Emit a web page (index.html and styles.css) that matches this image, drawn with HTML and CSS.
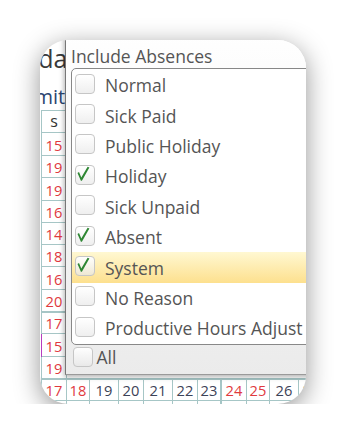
FILE: index.html
```html
<!DOCTYPE html>
<html lang="en">

<head>
    <meta charset="UTF-8">
    <meta name="viewport" content="width=device-width, initial-scale=1.0">
    <title>Calendar - Include Absences</title>
    <link rel="stylesheet" href="styles.css">
</head>

<body>
    <div class="frame">
        <!-- page behind the popup -->
        <h1 class="title">Calendar</h1>
        <p class="limit"><a href="#">Submit</a></p>

        <div class="grid">
            <div class="row head"><span class="cell">s</span><span class="cell rest"></span></div>
            <div class="row"><span class="cell off">15</span><span class="cell rest"></span></div>
            <div class="row"><span class="cell off">19</span><span class="cell rest"></span></div>
            <div class="row"><span class="cell off">19</span><span class="cell rest"></span></div>
            <div class="row"><span class="cell off">16</span><span class="cell rest"></span></div>
            <div class="row"><span class="cell off">14</span><span class="cell rest"></span></div>
            <div class="row"><span class="cell off">18</span><span class="cell rest"></span></div>
            <div class="row"><span class="cell off">16</span><span class="cell rest"></span></div>
            <div class="row thick"><span class="cell off">20</span><span class="cell rest"></span></div>
            <div class="row"><span class="cell off">17</span><span class="cell rest"></span></div>
            <div class="row"><span class="cell off mark">15</span><span class="cell rest"></span></div>
            <div class="row thick"><span class="cell off">19</span><span class="cell rest"></span></div>
            <div class="row">
                <span class="cell off">17</span>
                <span class="cell off">18</span>
                <span class="cell">19</span>
                <span class="cell">20</span>
                <span class="cell">21</span>
                <span class="cell">22</span>
                <span class="cell wk">23</span>
                <span class="cell off">24</span>
                <span class="cell off">25</span>
                <span class="cell">26</span>
                <span class="cell half">27</span>
                <span class="cell"></span>
            </div>
            <div class="row">
                <span class="cell"></span><span class="cell"></span><span class="cell"></span>
                <span class="cell"></span><span class="cell"></span><span class="cell"></span>
                <span class="cell wk"></span><span class="cell"></span><span class="cell"></span>
                <span class="cell"></span><span class="cell"></span><span class="cell"></span>
            </div>
        </div>

        <!-- absence filter popup -->
        <div class="popup">
            <div class="popup-title">Include Absences</div>
            <ul class="options">
                <li class="option"><span class="box"></span>Normal</li>
                <li class="option"><span class="box"></span>Sick Paid</li>
                <li class="option"><span class="box"></span>Public Holiday</li>
                <li class="option"><span class="box"><svg width="18" height="18" viewBox="0 0 18 18"><path d="M1.5 7 L3 6 L5.3 11.4 L11.6 0.8 L13.4 1.6 L5.9 14.8 L4.9 14.8 Z" fill="#2f8734"/></svg></span>Holiday</li>
                <li class="option"><span class="box"></span>Sick Unpaid</li>
                <li class="option"><span class="box"><svg width="18" height="18" viewBox="0 0 18 18"><path d="M1.5 7 L3 6 L5.3 11.4 L11.6 0.8 L13.4 1.6 L5.9 14.8 L4.9 14.8 Z" fill="#2f8734"/></svg></span>Absent</li>
                <li class="option active"><span class="box"><svg width="18" height="18" viewBox="0 0 18 18"><path d="M1.5 7 L3 6 L5.3 11.4 L11.6 0.8 L13.4 1.6 L5.9 14.8 L4.9 14.8 Z" fill="#2f8734"/></svg></span>System</li>
                <li class="option"><span class="box"></span>No Reason</li>
                <li class="option"><span class="box"></span>Productive Hours Adjust</li>
            </ul>
            <div class="all"><span class="box"></span>All</div>
        </div>
    </div>
</body>

</html>
```

FILE: styles.css
```css
/* page */
body {
    margin: 0;
    background: #fff;
    font-family: "Open Sans", "Noto Sans", sans-serif;
}

/* rounded frame with shadow */
.frame {
    position: relative;
    width: 266px;
    height: 364px;
    margin: 40px 0 0 40px;
    border-radius: 28px;
    overflow: hidden;
    background: #fff;
    box-shadow: 0 6px 26px rgba(0, 0, 0, 0.42);
}

.title {
    margin: 3px 0 0 -67px;
    font-size: 25px;
    font-weight: normal;
    line-height: 30px;
    color: #3a3a3a;
    white-space: nowrap;
}

.limit {
    margin: 12px 0 0 -41px;
    font-size: 20px;
    line-height: 24px;
    white-space: nowrap;
}

.limit a {
    color: #2b4570;
    text-decoration: none;
}

/* calendar grid */
.grid {
    width: max-content;
    margin: 1px 0 0 1px;
    border-top: 1px solid #a6c6c6;
    border-left: 1px solid #a6c6c6;
}

.row {
    display: grid;
    grid-template-columns: 25px 23px 29px 25px 29px 25px 24px 25px 23px 29px 25px 25px;
    height: 22.3px;
}

.row.head {
    height: 22px;
}

.cell {
    box-sizing: border-box;
    padding-top: 2px;
    border-right: 1px solid #a6c6c6;
    border-bottom: 1px solid #a6c6c6;
    text-align: center;
    font-size: 14.67px;
    line-height: 20px;
    color: #3c4257;
}

.head .cell {
    padding-top: 0;
    font-size: 16px;
    color: #333;
}

.rest {
    grid-column: 2 / -1;
}

.row.thick .cell {
    border-bottom-width: 2px;
}

.cell.wk {
    border-right-width: 2px;
}

.off {
    color: #e0393e;
}

.half {
    color: #e07030;
}

.mark {
    box-shadow: -1px 0 0 #b73cc0;
}

/* popup */
.popup {
    position: absolute;
    top: -10px;
    left: 25px;
    width: 300px;
    box-sizing: border-box;
    padding: 15px 0 7px 5px;
    border-left: 1px solid #777;
    border-bottom: 1px solid #9a9a9a;
    background: linear-gradient(#fff, #ebebeb);
    box-shadow: -1px 2px 5px rgba(0, 0, 0, 0.3);
    color: #555;
    font-size: 17.5px;
}

.popup-title {
    line-height: 22px;
    margin-bottom: 1px;
}

.options {
    list-style: none;
    margin: 0;
    padding: 1px 0 0;
    border: 1px solid #888;
    border-radius: 5px;
    background: #fff;
}

.option {
    display: flex;
    align-items: center;
    gap: 10px;
    height: 30.4px;
    padding-left: 3px;
    line-height: 22px;
    white-space: nowrap;
}

.option.active {
    background: linear-gradient(#fff8d2, #fde08e);
}

.box {
    flex: none;
    display: flex;
    width: 20px;
    height: 20px;
    box-sizing: border-box;
    margin-top: -3px;
    border: 1px solid #c6c6c6;
    border-radius: 4px;
    background: linear-gradient(rgba(255, 255, 255, 0.95), rgba(232, 232, 232, 0.7));
}

.box svg {
    display: block;
}

.all {
    display: flex;
    align-items: center;
    gap: 4px;
    height: 20px;
    margin: 2.5px 0 0 1.5px;
    line-height: 22px;
}

.all .box {
    margin-top: 0;
}
```
